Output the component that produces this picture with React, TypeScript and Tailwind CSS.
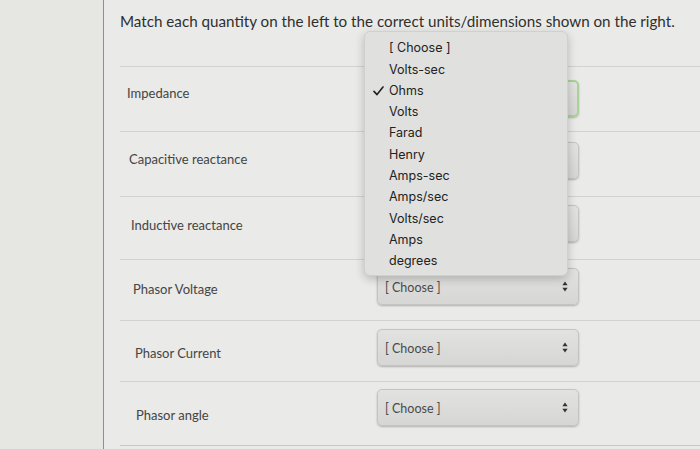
import React from "react";

// rows: label and select nudged to follow the photo's slant
const rows = [
  { label: "Impedance", h: "h-[65px]", pl: "pl-[7px]", lab: "mb-[10px]", sel: "mb-[2px]", covered: true, focused: true },
  { label: "Capacitive reactance", h: "h-[65px]", pl: "pl-[9px]", lab: "mb-[8px]", sel: "mb-[7px]", covered: true, focused: false },
  { label: "Inductive reactance", h: "h-[63px]", pl: "pl-[11px]", lab: "mb-[4px]", sel: "mb-[9px]", covered: true, focused: false },
  { label: "Phasor Voltage", h: "h-[61px]", pl: "pl-[13px]", lab: "mb-0", sel: "mb-[7px]", covered: false, focused: false },
  { label: "Phasor Current", h: "h-[61px]", pl: "pl-[15px]", lab: "mt-[6px]", sel: "mb-[7px]", covered: false, focused: false },
  { label: "Phasor angle", h: "h-[64px]", pl: "pl-[16px]", lab: "mt-[5px]", sel: "mb-[13px]", covered: false, focused: false },
];

const options = [
  "[ Choose ]",
  "Volts-sec",
  "Ohms",
  "Volts",
  "Farad",
  "Henry",
  "Amps-sec",
  "Amps/sec",
  "Volts/sec",
  "Amps",
  "degrees",
];

const Arrows = () => (
  <svg width="6" height="11" viewBox="0 0 6 11" className="shrink-0">
    <path d="M3 0.5 L5.6 4.2 L0.4 4.2 Z" fill="#333" />
    <path d="M3 10.5 L5.6 6.8 L0.4 6.8 Z" fill="#333" />
  </svg>
);

const Check = () => (
  <svg width="11" height="10" viewBox="0 0 11 10">
    <path d="M1 5.4 L4 8.6 L10 1" fill="none" stroke="#222" strokeWidth="1.6" strokeLinecap="round" strokeLinejoin="round" />
  </svg>
);

interface SelectBoxProps {
  focused: boolean;
  covered: boolean;
}

const SelectBox: React.FC<SelectBoxProps> = ({ focused, covered }) => (
  <div
    className={`flex h-[37px] w-[202px] items-center justify-between rounded-[5px] bg-gradient-to-b from-[#e2e2e0] to-[#d6d6d4] pl-[7px] pr-[10px] shadow-[0_1px_2px_rgba(0,0,0,0.25)] ${
      focused ? "border-2 border-[#a9d29a]" : "border border-[#c4c4c2]"
    }`}
  >
    <span className="pt-[4px] text-[12.5px] text-[#4a4a4a]">{covered ? "" : "[ Choose ]"}</span>
    <Arrows />
  </div>
);

export default function App() {
  return (
    <div
      className="relative h-[449px] w-[700px] overflow-hidden bg-[#e6e6e3]"
      style={{ fontFamily: "Lato, 'Noto Sans', sans-serif" }}
    >
      <div className="ml-[103px] flex h-full flex-col border-l border-[#8f8f8d] bg-[#eaeae8] pl-[16px]">
        <p className="mt-[11px] text-[15.2px] leading-[20px] text-[#2f2f2f]">
          Match each quantity on the left to the correct units/dimensions
          shown on the right.
        </p>
        <div className="mt-[35px] flex flex-col">
          {rows.map((r) => (
            <div
              key={r.label}
              className={`flex ${r.h} items-center border-t border-[#d2d2d0]`}
            >
              <span className={`w-[257px] shrink-0 ${r.pl} ${r.lab} text-[13px] text-[#444]`}>
                {r.label}
              </span>
              <div className={r.sel}>
                <SelectBox focused={r.focused} covered={r.covered} />
              </div>
            </div>
          ))}
          <div className="border-t border-[#c8c8c6]" />
        </div>
      </div>

      <div
        className="absolute left-[364px] top-[31px] w-[204px] rounded-[6px] border border-[#d0d0ce] bg-[#e0e0de] pb-[3px] pt-[6px] shadow-[0_3px_10px_rgba(0,0,0,0.22)]"
        style={{ fontFamily: "Inter, 'Liberation Sans', sans-serif" }}
      >
        {options.map((o) => (
          <div key={o} className="flex h-[21.3px] items-center text-[12.5px] text-[#222]">
            <span className="flex w-[24px] pl-[8px]">{o === "Ohms" ? <Check /> : null}</span>
            {o}
          </div>
        ))}
      </div>
    </div>
  );
}
